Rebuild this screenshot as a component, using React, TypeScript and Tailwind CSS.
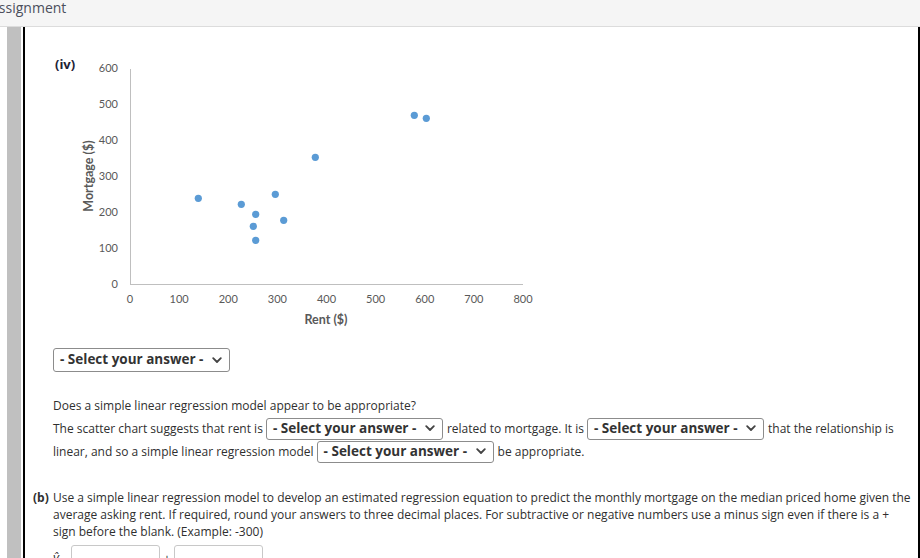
import React from "react";

const points: [number, number][] = [
  [123.3, 143.3],
  [166.3, 149.3],
  [180.7, 159.3],
  [178.3, 171.3],
  [180.7, 185.3],
  [200.3, 139.3],
  [208.7, 165.3],
  [240.3, 102.3],
  [339.3, 60.3],
  [351.3, 63.3],
];

function Chevron() {
  return (
    <svg width="10" height="7" viewBox="0 0 10 7" className="shrink-0">
      <polyline points="1.2,1.2 5,5 8.8,1.2" fill="none" stroke="#444" strokeWidth="1.8" strokeLinecap="round" strokeLinejoin="round" />
    </svg>
  );
}

function Select({ tall }: { tall?: boolean }) {
  return (
    <span
      className={`inline-flex shrink-0 items-center justify-between w-[177px] ${tall ? "h-[24px]" : "h-[22px]"} border border-[#8c8c8c] rounded-[3px] bg-white pl-[6px] pr-[7px] text-[13.5px] font-bold text-[#333] leading-none`}
    >
      <span>- Select your answer -</span>
      <Chevron />
    </span>
  );
}

function Chart() {
  const yTicks = [600, 500, 400, 300, 200, 100, 0];
  const xTicks = [0, 100, 200, 300, 400, 500, 600, 700, 800];
  return (
    <svg width="470" height="280" viewBox="0 0 470 280" className="block shrink-0">
      <g fontFamily="Lato, 'Liberation Sans', sans-serif" fontSize="11" fill="#595959">
        {yTicks.map((v) => (
          <text key={v} x={43} y={229 - v * 0.36 + 4} textAnchor="end">
            {v}
          </text>
        ))}
        {xTicks.map((v) => (
          <text key={v} x={55 + v * 0.4913} y={248} textAnchor="middle">
            {v}
          </text>
        ))}
        <text x={251} y={269} textAnchor="middle" fontWeight="bold" fontSize="12.5">
          Rent ($)
        </text>
        <text x={18} y={121} textAnchor="middle" fontWeight="bold" fontSize="12.5" transform="rotate(-90 18 121)">
          Mortgage ($)
        </text>
      </g>
      <line x1={55.5} y1={14} x2={55.5} y2={229.5} stroke="#bfbfbf" strokeWidth="1" />
      <line x1={55} y1={229.5} x2={448} y2={229.5} stroke="#bfbfbf" strokeWidth="1" />
      {points.map(([x, y], i) => (
        <circle key={i} cx={x} cy={y} r={3.6} fill="#5b9bd5" />
      ))}
    </svg>
  );
}

export default function App() {
  return (
    <div className="w-[920px] h-[558px] overflow-hidden bg-white font-['Open_Sans',sans-serif] text-[#2f2f2f]">
      <div className="h-[27px] bg-[#f5f5f5] border-b border-[#dcdcdc] overflow-hidden">
        <div className="ml-[-10px] text-[14px] leading-[16px] text-[#4b4f5c] whitespace-nowrap">Assignment</div>
      </div>

      <div className="flex h-[531px]">
        <div className="w-[7px] shrink-0" />
        <div className="w-[14px] shrink-0 bg-[#c0c0c0]" />
        <div className="w-[2px] shrink-0" />
        <div className="flex-1 min-w-0 overflow-hidden border-l-2 border-r-2 border-black pl-[28px] pt-[28px]">
          <div className="flex items-start">
            <span className="ml-[2px] w-[20px] shrink-0 text-[13px] font-bold leading-[18px] text-[#1e2235]">(iv)</span>
            <Chart />
          </div>

          <div className="mt-[13px] flex">
            <Select tall />
          </div>

          <div className="mt-[22px] text-[12px] whitespace-nowrap">
            <div className="flex items-center h-[23px]">Does a simple linear regression model appear to be appropriate?</div>
            <div className="flex items-center gap-[3px] h-[23px]">
              <span>The scatter chart suggests that rent is</span>
              <Select />
              <span className="ml-[1px]">related to mortgage. It is</span>
              <Select />
              <span className="ml-[1px]">that the relationship is</span>
            </div>
            <div className="flex items-center gap-[3px] h-[23px]">
              <span>linear, and so a simple linear regression model</span>
              <Select />
              <span className="ml-[1px]">be appropriate.</span>
            </div>
          </div>

          <div className="mt-[26px] flex text-[12px] leading-[17px] whitespace-nowrap">
            <span className="ml-[-20px] w-[20px] shrink-0 font-bold">(b)</span>
            <div>
              <div>Use a simple linear regression model to develop an estimated regression equation to predict the monthly mortgage on the median priced home given the</div>
              <div>average asking rent. If required, round your answers to three decimal places. For subtractive or negative numbers use a minus sign even if there is a +</div>
              <div>sign before the blank. (Example: -300)</div>
            </div>
          </div>

          <div className="mt-[5px] flex items-start text-[13px]">
            <span className="w-[18px] shrink-0 pt-[3px] italic">ŷ</span>
            <span className="w-[89px] h-[26px] shrink-0 border border-[#c8c8c8] rounded-[3px]" />
            <span className="w-[14px] shrink-0 text-center pt-[4px]">+</span>
            <span className="w-[89px] h-[26px] shrink-0 border border-[#c8c8c8] rounded-[3px]" />
            <span className="pl-[4px] pt-[8px]">x</span>
          </div>
        </div>
      </div>
    </div>
  );
}
